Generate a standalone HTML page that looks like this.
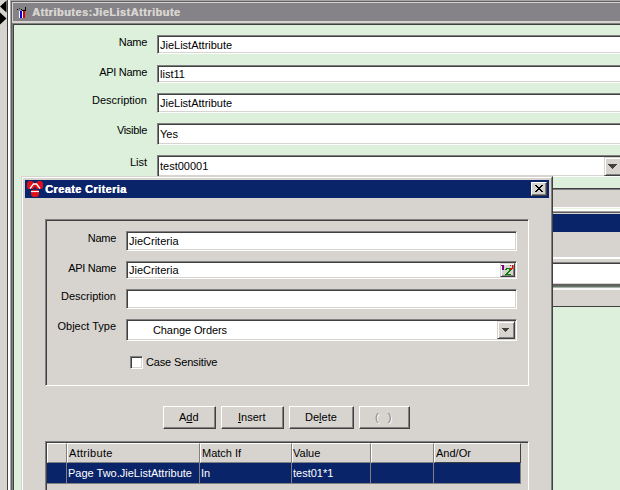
<!DOCTYPE html>
<html><head><meta charset="utf-8">
<style>
html,body{margin:0;padding:0;}
body{width:620px;height:490px;overflow:hidden;position:relative;background:#d7d4cf;font-family:"Liberation Sans",sans-serif;font-size:11px;color:#000;}
div,span{position:absolute;box-sizing:border-box;}
.t{white-space:nowrap;line-height:13px;}
.sunk{border:1px solid;border-color:#808080 #fff #fff #808080;box-shadow:inset 1px 1px #404040,inset -1px -1px #d7d4cf;background:#fff;}
.btn{border:1px solid;border-color:#fff #404040 #404040 #fff;box-shadow:inset -1px -1px #808080;background:#d7d4cf;}
.lbl{text-align:right;}
</style></head><body>

<!-- left strip -->
<svg style="position:absolute;left:0;top:0" width="8" height="26">
  <polygon points="0,6.5 6.5,0.5 6.5,12.5" fill="#000"/>
  <polygon points="0,12.5 6.5,18.5 0,24.5" fill="#000"/>
</svg>
<div style="left:7px;top:0;width:1px;height:490px;background:#404040"></div>
<div style="left:8px;top:0;width:2px;height:490px;background:#fff"></div>

<!-- Attributes window frame -->
<div style="left:10px;top:0;width:610px;height:490px;background:#a8a8a8"></div>
<div style="left:11px;top:1px;width:609px;height:489px;background:#606060"></div>
<div style="left:12px;top:2px;width:608px;height:488px;background:#d7d4cf"></div>
<div style="left:13px;top:3px;width:607px;height:18px;background:#858388"></div>
<div style="left:12px;top:23px;width:608px;height:467px;background:#808080"></div>
<div style="left:13px;top:24px;width:607px;height:466px;background:#404040"></div>
<div style="left:14px;top:25px;width:606px;height:465px;background:#dcf0dc"></div>

<!-- title icon -->
<svg style="position:absolute;left:16px;top:6px" width="12" height="14">
  <rect x="3" y="5" width="1" height="7" fill="#fff"/>
  <rect x="4" y="5" width="2" height="7" fill="#0000e0"/>
  <rect x="6" y="5" width="1" height="7" fill="#fff"/>
  <rect x="7" y="5" width="2" height="7" fill="#e00000"/>
  <rect x="1" y="3" width="1" height="1" fill="#000"/>
  <rect x="3" y="2" width="1" height="1" fill="#333"/>
  <rect x="5" y="3" width="1" height="1" fill="#000"/>
  <rect x="6" y="4" width="3" height="1" fill="#000"/>
  <rect x="9" y="1" width="1" height="4" fill="#000"/>
</svg>
<div class="t" style="left:32px;top:6px;font-weight:bold;color:#d7d4cf;letter-spacing:0.45px;text-shadow:0.4px 0 currentColor">Attributes:JieListAttribute</div>

<!-- attribute fields -->
<div class="t lbl" style="left:40px;width:107px;top:36px;letter-spacing:-0.3px">Name</div>
<div class="sunk" style="left:157px;top:35px;width:470px;height:19px"></div>
<div class="t" style="left:160px;top:39px">JieListAttribute</div>

<div class="t lbl" style="left:40px;width:107px;top:66px;letter-spacing:-0.3px">API Name</div>
<div class="sunk" style="left:157px;top:65px;width:470px;height:18px"></div>
<div class="t" style="left:160px;top:68px">list11</div>

<div class="t lbl" style="left:40px;width:107px;top:94px">Description</div>
<div class="sunk" style="left:157px;top:93px;width:470px;height:20px"></div>
<div class="t" style="left:160px;top:97px">JieListAttribute</div>

<div class="t lbl" style="left:40px;width:107px;top:124px;letter-spacing:-0.3px">Visible</div>
<div class="sunk" style="left:157px;top:123px;width:470px;height:22px"></div>
<div class="t" style="left:160px;top:128px">Yes</div>

<div class="t lbl" style="left:40px;width:107px;top:156px">List</div>
<div class="sunk" style="left:157px;top:155px;width:470px;height:22px"></div>
<div class="t" style="left:160px;top:160px">test00001</div>
<div style="left:604px;top:157px;width:30px;height:19px;border:1px solid;border-color:#d7d4cf #404040 #404040 #d7d4cf;box-shadow:inset 1px 1px #fff,inset -1px -1px #808080;background:#d7d4cf"></div>
<svg style="position:absolute;left:608px;top:164px" width="9" height="5" shape-rendering="crispEdges" fill="#404040"><rect x="0" y="0" width="9" height="1"/><rect x="1" y="1" width="7" height="1"/><rect x="2" y="2" width="5" height="1"/><rect x="3" y="3" width="3" height="1"/><rect x="4" y="4" width="1" height="1"/></svg>

<!-- background panel right of dialog -->
<div style="left:540px;top:188px;width:80px;height:1px;background:#404040"></div>
<div style="left:540px;top:189px;width:80px;height:1px;background:#808080"></div>
<div style="left:540px;top:190px;width:80px;height:17px;background:#d7d4cf"></div>
<div style="left:540px;top:207px;width:80px;height:4px;background:#fff"></div>
<div style="left:540px;top:208px;width:80px;height:1px;background:#e2f4e2"></div>
<div style="left:540px;top:211px;width:80px;height:1px;background:#a0a0a0"></div>
<div style="left:540px;top:212px;width:80px;height:1px;background:#606060"></div>
<div style="left:540px;top:213px;width:80px;height:1px;background:#d7d4cf"></div>
<div style="left:540px;top:214px;width:80px;height:18px;background:#0a246a"></div>
<div style="left:540px;top:232px;width:80px;height:25px;background:#d7d4cf"></div>
<div style="left:540px;top:257px;width:80px;height:2px;background:#fff"></div>
<div style="left:540px;top:259px;width:80px;height:3px;background:#d7d4cf"></div>
<div style="left:540px;top:262px;width:80px;height:1px;background:#808080"></div>
<div style="left:540px;top:263px;width:80px;height:1px;background:#404040"></div>
<div style="left:540px;top:264px;width:80px;height:19px;background:#fff"></div>
<div style="left:540px;top:283px;width:80px;height:1px;background:#d7d4cf"></div>
<div style="left:540px;top:284px;width:80px;height:2px;background:#606060"></div>
<div style="left:540px;top:286px;width:80px;height:1px;background:#6a7a6a"></div>
<div style="left:540px;top:287px;width:80px;height:1px;background:#a8b4a8"></div>
<div style="left:540px;top:288px;width:80px;height:2px;background:#f8f8f8"></div>
<div style="left:540px;top:290px;width:80px;height:16px;background:#d7d4cf"></div>
<div style="left:540px;top:306px;width:80px;height:1px;background:#404040"></div>

<!-- Create Criteria dialog -->
<div style="left:21px;top:176px;width:532px;height:320px;background:#d7d4cf;border-left:1px solid #d7d4cf;border-top:1px solid #d7d4cf;border-right:1px solid #404040;"></div>
<div style="left:22px;top:177px;width:530px;height:320px;border-left:1px solid #fff;border-top:1px solid #fff;border-right:1px solid #808080;"></div>
<div style="left:25px;top:180px;width:524px;height:18px;background:#0a246a"></div>
<svg style="position:absolute;left:25px;top:179px" width="20" height="20">
  <polygon points="4,2 7,2 9,4 9,8 8,10 3,10 2,8 2,4" fill="#e0101a"/>
  <polygon points="13,2 16,2 18,4 18,8 17,10 12,10 11,8 11,4" fill="#e0101a"/>
  <rect x="7" y="4" width="6" height="6" fill="#e0101a"/>
  <polygon points="8.5,10 10,7.5 11.5,10" fill="#0a246a"/>
  <polygon points="8,10 12,10 14,12 14,16 12,18 8,18 6,16 6,12" fill="#e0101a"/>
  <path d="M5 9.5 L8.5 5 L11.5 5 L15 9.5" stroke="#fff" stroke-width="1.3" fill="none"/>
  <path d="M6 12.5 L14 12.5" stroke="#fff" stroke-width="1.2" fill="none"/>
  <rect x="2" y="10" width="16" height="0.8" fill="#0a246a"/>
</svg>
<div class="t" style="left:45px;top:183px;font-weight:bold;color:#fff;letter-spacing:0.38px;text-shadow:0.4px 0 currentColor">Create Criteria</div>
<div class="btn" style="left:531px;top:182px;width:16px;height:14px"></div>
<svg style="position:absolute;left:535px;top:185px" width="8" height="7" shape-rendering="crispEdges" fill="#000"><rect x="0" y="0" width="1" height="1"/><rect x="1" y="0" width="1" height="1"/><rect x="6" y="0" width="1" height="1"/><rect x="7" y="0" width="1" height="1"/><rect x="1" y="1" width="1" height="1"/><rect x="2" y="1" width="1" height="1"/><rect x="5" y="1" width="1" height="1"/><rect x="6" y="1" width="1" height="1"/><rect x="2" y="2" width="1" height="1"/><rect x="3" y="2" width="1" height="1"/><rect x="4" y="2" width="1" height="1"/><rect x="5" y="2" width="1" height="1"/><rect x="3" y="3" width="1" height="1"/><rect x="4" y="3" width="1" height="1"/><rect x="2" y="4" width="1" height="1"/><rect x="3" y="4" width="1" height="1"/><rect x="4" y="4" width="1" height="1"/><rect x="5" y="4" width="1" height="1"/><rect x="1" y="5" width="1" height="1"/><rect x="2" y="5" width="1" height="1"/><rect x="5" y="5" width="1" height="1"/><rect x="6" y="5" width="1" height="1"/><rect x="0" y="6" width="1" height="1"/><rect x="1" y="6" width="1" height="1"/><rect x="6" y="6" width="1" height="1"/><rect x="7" y="6" width="1" height="1"/></svg>

<!-- group box -->
<div style="left:45px;top:219px;width:484px;height:167px;border:1px solid;border-color:#808080 #fff #fff #808080;box-shadow:inset 1px 1px #404040"></div>

<div class="t lbl" style="left:50px;width:66px;top:232px;letter-spacing:-0.3px">Name</div>
<div class="sunk" style="left:126px;top:231px;width:391px;height:20px"></div>
<div class="t" style="left:129px;top:235px">JieCriteria</div>

<div class="t lbl" style="left:50px;width:66px;top:262px;letter-spacing:-0.3px">API Name</div>
<div class="sunk" style="left:126px;top:261px;width:391px;height:18px"></div>
<div class="t" style="left:129px;top:264px">JieCriteria</div>
<div style="left:500px;top:263px;width:15px;height:14px;border:1px solid;border-color:#d7d4cf #404040 #404040 #d7d4cf;box-shadow:inset 1px 1px #fff,inset -1px -1px #808080;background:#d7d4cf"></div>
<svg style="position:absolute;left:500px;top:263px" width="15" height="14" shape-rendering="crispEdges"><rect x="1" y="2" width="1" height="1" fill="#800080"/><rect x="2" y="2" width="1" height="1" fill="#800080"/><rect x="3" y="2" width="1" height="1" fill="#800080"/><rect x="2" y="3" width="1" height="1" fill="#800080"/><rect x="3" y="3" width="1" height="1" fill="#800080"/><rect x="2" y="4" width="1" height="1" fill="#800080"/><rect x="3" y="4" width="1" height="1" fill="#800080"/><rect x="2" y="5" width="1" height="1" fill="#800080"/><rect x="3" y="5" width="1" height="1" fill="#800080"/><rect x="2" y="6" width="1" height="1" fill="#800080"/><rect x="3" y="6" width="1" height="1" fill="#800080"/><rect x="10" y="2" width="1" height="1" fill="#ff0000"/><rect x="12" y="2" width="1" height="1" fill="#ff0000"/><rect x="12" y="3" width="1" height="1" fill="#ff0000"/><rect x="12" y="4" width="1" height="1" fill="#ff0000"/><rect x="9" y="5" width="1" height="1" fill="#ff0000"/><rect x="10" y="5" width="1" height="1" fill="#ff0000"/><rect x="11" y="5" width="1" height="1" fill="#ff0000"/><rect x="12" y="5" width="1" height="1" fill="#ff0000"/><rect x="9" y="6" width="1" height="1" fill="#ff0000"/><rect x="10" y="6" width="1" height="1" fill="#ff0000"/><rect x="11" y="6" width="1" height="1" fill="#ff0000"/><rect x="6" y="5" width="1" height="1" fill="#008000"/><rect x="7" y="5" width="1" height="1" fill="#008000"/><rect x="8" y="5" width="1" height="1" fill="#008000"/><rect x="9" y="5" width="1" height="1" fill="#008000"/><rect x="5" y="6" width="1" height="1" fill="#008000"/><rect x="6" y="6" width="1" height="1" fill="#008000"/><rect x="9" y="6" width="1" height="1" fill="#008000"/><rect x="10" y="6" width="1" height="1" fill="#008000"/><rect x="9" y="7" width="1" height="1" fill="#008000"/><rect x="10" y="7" width="1" height="1" fill="#008000"/><rect x="8" y="8" width="1" height="1" fill="#008000"/><rect x="9" y="8" width="1" height="1" fill="#008000"/><rect x="7" y="9" width="1" height="1" fill="#008000"/><rect x="8" y="9" width="1" height="1" fill="#008000"/><rect x="6" y="10" width="1" height="1" fill="#008000"/><rect x="7" y="10" width="1" height="1" fill="#008000"/><rect x="5" y="11" width="1" height="1" fill="#008000"/><rect x="6" y="11" width="1" height="1" fill="#008000"/><rect x="7" y="11" width="1" height="1" fill="#008000"/><rect x="8" y="11" width="1" height="1" fill="#008000"/><rect x="9" y="11" width="1" height="1" fill="#008000"/><rect x="10" y="11" width="1" height="1" fill="#008000"/></svg>

<div class="t lbl" style="left:50px;width:66px;top:290px">Description</div>
<div class="sunk" style="left:126px;top:289px;width:391px;height:20px"></div>

<div class="t lbl" style="left:50px;width:66px;top:320px">Object Type</div>
<div class="sunk" style="left:126px;top:319px;width:391px;height:22px"></div>
<div class="t" style="left:153px;top:324px;letter-spacing:-0.1px">Change Orders</div>
<div style="left:497px;top:321px;width:18px;height:18px;border:1px solid;border-color:#d7d4cf #404040 #404040 #d7d4cf;box-shadow:inset 1px 1px #fff,inset -1px -1px #808080;background:#d7d4cf"></div>
<svg style="position:absolute;left:502px;top:328px" width="7" height="4" shape-rendering="crispEdges" fill="#404040"><rect x="0" y="0" width="7" height="1"/><rect x="1" y="1" width="5" height="1"/><rect x="2" y="2" width="3" height="1"/><rect x="3" y="3" width="1" height="1"/></svg>

<div class="sunk" style="left:130px;top:356px;width:13px;height:13px"></div>
<div class="t" style="left:146px;top:356px;letter-spacing:-0.15px">Case Sensitive</div>

<!-- buttons -->
<div class="btn" style="left:163px;top:406px;width:53px;height:23px"></div>
<div class="t" style="left:179px;top:411px">A<u>d</u>d</div>
<div class="btn" style="left:221px;top:406px;width:63px;height:23px"></div>
<div class="t" style="left:238px;top:411px"><u>I</u>nsert</div>
<div class="btn" style="left:289px;top:406px;width:65px;height:23px"></div>
<div class="t" style="left:305px;top:411px">De<u>l</u>ete</div>
<div class="btn" style="left:359px;top:406px;width:51px;height:23px"></div>
<div class="t" style="left:376px;top:412px;color:#fff">(&nbsp;&nbsp;&nbsp;)</div>
<div class="t" style="left:375px;top:411px;color:#808080">(&nbsp;&nbsp;&nbsp;)</div>

<!-- table -->
<div style="left:45px;top:441px;width:484px;height:60px;border:1px solid;border-color:#808080 #fff #fff #808080;box-shadow:inset 1px 1px #404040"></div>
<!-- header -->
<div style="left:47px;top:443px;width:474px;height:20px;background:#d7d4cf"></div>
<div style="left:47px;top:443px;width:20px;height:20px;border-top:1px solid #fff;border-left:1px solid #fff;border-right:1px solid #808080;border-bottom:1px solid #808080"></div>
<div style="left:67px;top:443px;width:133px;height:20px;border-top:1px solid #fff;border-left:1px solid #fff;border-right:1px solid #808080;border-bottom:1px solid #808080"></div>
<div style="left:200px;top:443px;width:92px;height:20px;border-top:1px solid #fff;border-left:1px solid #fff;border-right:1px solid #808080;border-bottom:1px solid #808080"></div>
<div style="left:292px;top:443px;width:79px;height:20px;border-top:1px solid #fff;border-left:1px solid #fff;border-right:1px solid #808080;border-bottom:1px solid #808080"></div>
<div style="left:371px;top:443px;width:63px;height:20px;border-top:1px solid #fff;border-left:1px solid #fff;border-right:1px solid #808080;border-bottom:1px solid #808080"></div>
<div style="left:434px;top:443px;width:87px;height:20px;border-top:1px solid #fff;border-left:1px solid #fff;border-right:1px solid #404040;border-bottom:1px solid #404040"></div>
<div class="t" style="left:69px;top:447px;letter-spacing:0.3px">Attribute</div>
<div class="t" style="left:202px;top:447px">Match If</div>
<div class="t" style="left:293px;top:447px">Value</div>
<div class="t" style="left:436px;top:447px">And/Or</div>
<!-- selected row -->
<div style="left:47px;top:463px;width:474px;height:21px;background:#0a246a;border-bottom:1px solid #808080"></div>
<div style="left:66px;top:463px;width:1px;height:20px;background:#808080"></div>
<div style="left:199px;top:463px;width:1px;height:20px;background:#808080"></div>
<div style="left:291px;top:463px;width:1px;height:20px;background:#808080"></div>
<div style="left:370px;top:463px;width:1px;height:20px;background:#808080"></div>
<div style="left:433px;top:463px;width:1px;height:20px;background:#808080"></div>
<div style="left:520px;top:463px;width:1px;height:20px;background:#808080"></div>
<div class="t" style="left:68px;top:467px;color:#fff">Page Two.JieListAttribute</div>
<div class="t" style="left:201px;top:467px;color:#fff">In</div>
<div class="t" style="left:293px;top:467px;color:#fff">test01*1</div>

</body></html>
